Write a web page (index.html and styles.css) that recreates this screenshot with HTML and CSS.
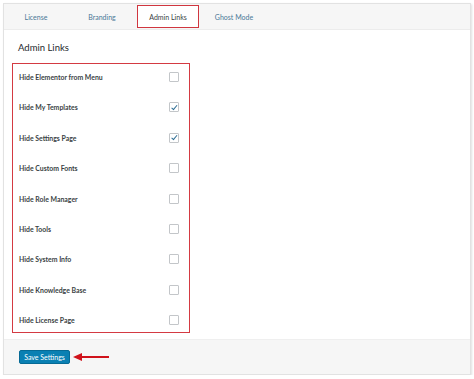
FILE: index.html
```
<!DOCTYPE html>
<html lang="en">
<head>
    <meta charset="UTF-8">
    <title>Admin Links</title>
    <link rel="stylesheet" href="styles.css">
</head>
<body>
    <div class="panel">
        <div class="tabs">
            <div class="tab">License</div>
            <div class="tab">Branding</div>
            <div class="tab active">Admin Links</div>
            <div class="tab">Ghost Mode</div>
        </div>

        <div class="content">
            <h3>Admin Links</h3>
            <div class="options">
                <div class="option"><span>Hide Elementor from Menu</span><span class="check"></span></div>
                <div class="option"><span>Hide My Templates</span><span class="check on"></span></div>
                <div class="option"><span>Hide Settings Page</span><span class="check on"></span></div>
                <div class="option"><span>Hide Custom Fonts</span><span class="check"></span></div>
                <div class="option"><span>Hide Role Manager</span><span class="check"></span></div>
                <div class="option"><span>Hide Tools</span><span class="check"></span></div>
                <div class="option"><span>Hide System Info</span><span class="check"></span></div>
                <div class="option"><span>Hide Knowledge Base</span><span class="check"></span></div>
                <div class="option"><span>Hide License Page</span><span class="check"></span></div>
            </div>
        </div>

        <div class="footer">
            <button class="save">Save Settings</button>
            <svg class="arrow" width="38" height="10" viewBox="0 0 38 10">
                <line x1="6" y1="5" x2="36" y2="5" stroke="#d0121b" stroke-width="2"/>
                <polygon points="0,5 9,1 9,9" fill="#d0121b"/>
            </svg>
        </div>
    </div>
</body>
</html>
```

FILE: styles.css
```
body {
    margin: 0;
    background-color: #fff;
    font-family: Lato, "Open Sans", sans-serif;
    color: #23282d;
}

.panel {
    margin: 3px 0 0 3px;
    width: 466px;
    border: 1px solid #e2e2e2;
    box-shadow: 1px 1px 2px rgba(0, 0, 0, 0.12);
}

.tabs {
    display: flex;
    gap: 4px;
    height: 25px;
    padding-left: 1px;
    background-color: #f6f6f6;
    border-bottom: 1px solid #ececec;
}

.tab {
    width: 62px;
    margin-top: 1px;
    height: 23px;
    box-sizing: border-box;
    display: flex;
    align-items: center;
    justify-content: center;
    font-size: 7px;
    color: #4a7896;
}

.tab.active {
    background-color: #fff;
    border: 1px solid #d0363f;
    color: #3a3f44;
}

.content {
    padding: 11px 8px 6px;
}

.content h3 {
    margin: 0 0 8px 6px;
    font-size: 9.5px;
    line-height: 14px;
    font-weight: 400;
}

.options {
    width: 176px;
    border: 1px solid #d43a42;
    padding-top: 1px;
    display: flex;
    flex-direction: column;
    gap: 6.4px;
}

.option {
    height: 24px;
    display: flex;
    align-items: center;
    justify-content: space-between;
    padding: 0 10px 0 6px;
    font-size: 6.9px;
    font-weight: 700;
    color: #3a3f44;
}

.check {
    width: 8px;
    height: 8px;
    border: 1px solid #c3c6c9;
    border-radius: 1px;
    background-color: #fff;
    position: relative;
}

.check.on::after {
    content: "";
    position: absolute;
    left: 2.5px;
    top: 0.5px;
    width: 2px;
    height: 4.5px;
    border-right: 1.5px solid #2b6c93;
    border-bottom: 1.5px solid #2b6c93;
    transform: rotate(40deg);
}

.footer {
    height: 35px;
    background-color: #f6f6f6;
    border-top: 1px solid #efefef;
    display: flex;
    align-items: flex-start;
    padding: 10px 0 0 15px;
    box-sizing: border-box;
}

.save {
    width: 51px;
    height: 14px;
    padding: 0;
    font-family: inherit;
    font-size: 7px;
    color: #fff;
    background-color: #0a80b3;
    border: 1px solid #066a95;
    border-radius: 2px;
}

.arrow {
    margin: 2px 0 0 3px;
}
```
